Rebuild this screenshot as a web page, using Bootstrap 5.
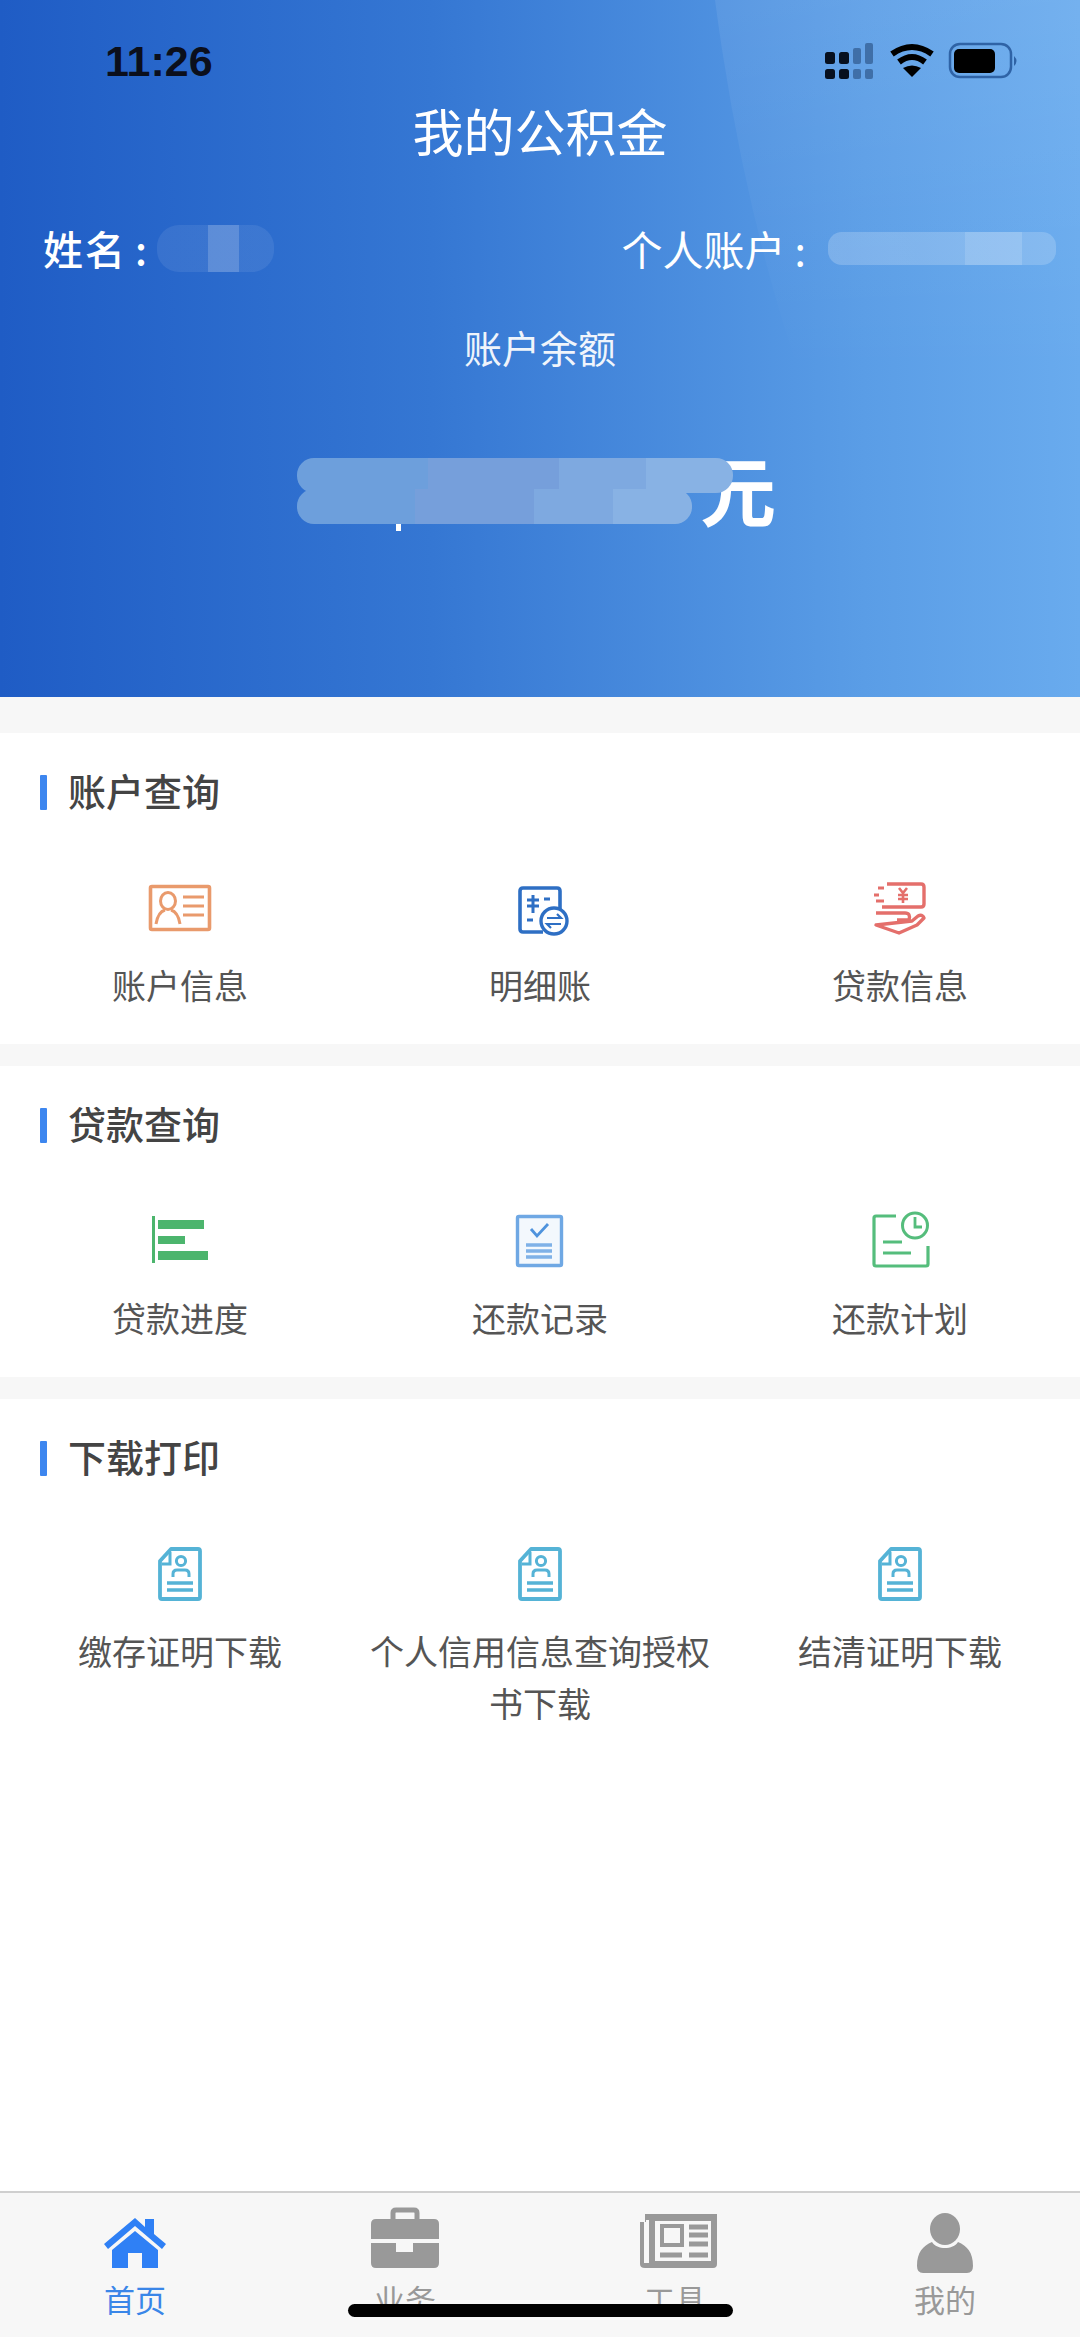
<!DOCTYPE html>
<html lang="zh-CN">
<head>
  <meta charset="UTF-8">
  <meta name="viewport" content="width=device-width, initial-scale=1.0">
  <title>我的公积金</title>
  <link href="https://cdn.jsdelivr.net/npm/bootstrap@5.3.0/dist/css/bootstrap.min.css" rel="stylesheet">
  <style>
    body { font-family: "Noto Sans CJK SC", "Liberation Sans", sans-serif; background: #fff; }
    .app-page { width: 1080px; height: 2337px; position: relative; overflow: hidden; }

    /* 顶部 */
    .hero { height: 697px; position: relative; overflow: hidden; background: linear-gradient(90deg, #1f5cc5 0%, #3577d3 40%, #5a9de6 80%, #69abee 100%); }
    .hero::after { content: ""; position: absolute; left: 696px; top: -1500px; width: 1200px; height: 2400px; border-radius: 50%; background: linear-gradient(180deg, rgba(255,255,255,.08) 0 62%, rgba(255,255,255,0) 78%); }
    .hero > * { position: relative; z-index: 1; }
    .status-row { height: 62px; margin-top: 30px; margin-bottom: 3px; padding: 0 58px 0 105px; }
    .status-time { font: bold 43px/62px "Liberation Sans", sans-serif; color: #0b0f1c; }
    .hero-title { font-size: 51px; line-height: 70px; color: #fff; }
    .info-row { height: 60px; margin-top: 53px; padding: 0 24px 0 43px; color: #fff; }
    .name-label { font-size: 40px; font-weight: 500; line-height: 60px; letter-spacing: 2px; }
    .name-colon { margin-left: 8px; }
    .acct-label { font-size: 41px; line-height: 60px; margin-right: 22px; }
    .mask-name { width: 117px; height: 47px; margin-left: 8px; border-radius: 22px; background: linear-gradient(90deg, rgba(255,255,255,.08) 0 44%, rgba(255,255,255,.24) 44% 70%, rgba(255,255,255,.08) 70%); }
    .mask-acct { width: 228px; height: 33px; border-radius: 14px; background: linear-gradient(90deg, rgba(255,255,255,.2) 0 60%, rgba(255,255,255,.3) 60% 85%, rgba(255,255,255,.18) 85%); }
    .balance-label { font-size: 38px; line-height: 50px; margin-top: 44px; color: #fff; opacity: .92; }
    .amount-row { height: 90px; margin-top: 73px; position: relative; }
    .amount-unit { position: absolute; left: 700px; top: -2px; font-size: 76px; line-height: 90px; font-weight: 700; color: #fff; }
    .amount-mask { position: absolute; left: 297px; height: 35px; border-radius: 17px; background: linear-gradient(90deg, #6d9fdc 0 30%, #769fdb 30% 60%, #7ea9e0 60% 80%, #88b2e4 80%); }
    .amount-mask.mask-top { top: 13px; width: 436px; }
    .amount-mask.mask-low { top: 44px; width: 395px; }
    .amount-tick { position: absolute; left: 396px; top: 77px; width: 5px; height: 9px; background: #fff; }

    /* 功能分组 */
    .page-body { background: #f7f7f7; padding-top: 36px; }
    .func-group { background: #fff; padding-top: 41px; padding-bottom: 33px; margin-bottom: 22px; }
    .func-group.last-group { margin-bottom: 0; height: 790px; }
    .group-head { height: 36px; }
    .group-bar { width: 7px; height: 35px; margin-left: 40px; margin-right: 21px; background: #3d86ef; border-radius: 1px; }
    .group-title { font-size: 38px; line-height: 36px; font-weight: 500; color: #444; padding-bottom: 5px; }
    .func-list { margin-top: 63px; }
    .func-icon { height: 70px; margin-bottom: 16px; }
    .func-label { font-size: 34px; line-height: 52px; color: #555; padding: 0 8px; }

    /* 底部 */
    .tab-bar { position: absolute; left: 0; right: 0; bottom: 0; height: 146px; background: #f7f7f7; border-top: 2px solid #cfcfcf; padding-top: 13px; }
    .tab-name { font-size: 31px; line-height: 40px; margin-top: 3px; color: #999; }
    .tab-name.is-on { color: #3a86e8; }
    .home-line { position: absolute; left: 348px; top: 2304px; width: 385px; height: 13px; border-radius: 7px; background: #000; }
  </style>
</head>
<body>
  <div class="app-page">
    <div class="hero">
      <div class="status-row d-flex justify-content-between align-items-center">
        <span class="status-time">11:26</span>
        <svg width="200" height="44" viewBox="0 0 200 44">
          <g fill="#07101f">
            <rect x="3" y="13" width="10" height="12" rx="2.5"/><rect x="17" y="13" width="10" height="12" rx="2.5"/>
            <rect x="3" y="30" width="10" height="10" rx="2.5"/><rect x="17" y="30" width="10" height="10" rx="2.5"/>
          </g>
          <g fill="#3f6fa8">
            <rect x="31" y="9" width="8" height="16" rx="2"/><rect x="43" y="4" width="8" height="21" rx="2"/>
            <rect x="31" y="30" width="8" height="10" rx="2"/><rect x="43" y="30" width="8" height="10" rx="2"/>
          </g>
          <path d="M70 15 Q90 1 110 15" fill="none" stroke="#000" stroke-width="6"/>
          <path d="M77 23 Q90 13 103 23" fill="none" stroke="#000" stroke-width="6"/>
          <path d="M81 29 Q90 24 99 29 L90 38 Z" fill="#000"/>
          <rect x="128" y="5" width="61" height="33" rx="10" fill="none" stroke="#2f63a6" stroke-width="2.5"/>
          <rect x="132" y="10" width="41" height="24" rx="5" fill="#000"/>
          <path d="M192 17 Q197 22 192 27 Z" fill="#2f63a6"/>
        </svg>
      </div>
      <div class="hero-title text-center">我的公积金</div>
      <div class="info-row d-flex align-items-center">
        <span class="name-label">姓名<span class="name-colon">:</span></span>
        <span class="mask-name"></span>
        <span class="acct-label ms-auto">个人账户 :</span>
        <span class="mask-acct"></span>
      </div>
      <div class="balance-label text-center">账户余额</div>
      <div class="amount-row">
        <span class="amount-unit">元</span>
        <span class="amount-tick"></span>
        <span class="amount-mask mask-top"></span>
        <span class="amount-mask mask-low"></span>
      </div>
    </div>

    <div class="page-body">
      <svg width="0" height="0" class="d-block">
        <symbol id="doc-icon" viewBox="0 0 70 70">
          <path d="M26 10 H53 Q55 10 55 12 V58 Q55 60 53 60 H17 Q15 60 15 58 V22 Z" fill="none" stroke="#55b3d6" stroke-width="3.8" stroke-linejoin="round"/>
          <path d="M25 13 V25 H17" fill="none" stroke="#55b3d6" stroke-width="3"/>
          <circle cx="36" cy="22" r="4.6" fill="none" stroke="#55b3d6" stroke-width="3"/>
          <path d="M28 38 V35 Q28 31 32 31 H40 Q44 31 44 35 V38" fill="none" stroke="#55b3d6" stroke-width="3"/>
          <path d="M22 44 H48 M22 51 H48" stroke="#55b3d6" stroke-width="3.4"/>
        </symbol>
      </svg>

      <div class="func-group">
        <div class="group-head d-flex align-items-center">
          <span class="group-bar"></span><span class="group-title">账户查询</span>
        </div>
        <div class="func-list row g-0 text-center">
          <div class="col-4">
            <div class="func-icon d-flex justify-content-center">
              <svg width="70" height="70" viewBox="0 0 70 70">
                <rect x="5.5" y="13.5" width="59" height="43" rx="1.5" fill="none" stroke="#e99a6c" stroke-width="3.6"/>
                <ellipse cx="23" cy="28" rx="7.5" ry="8.5" fill="none" stroke="#e99a6c" stroke-width="3"/>
                <path d="M11 51 Q13 39 20 37 M35 51 Q33 39 26 37" fill="none" stroke="#e99a6c" stroke-width="3"/>
                <path d="M38 24 H59 M38 33 H59 M38 42 H59" stroke="#e99a6c" stroke-width="3"/>
              </svg>
            </div>
            <div class="func-label">账户信息</div>
          </div>
          <div class="col-4">
            <div class="func-icon d-flex justify-content-center">
              <svg width="70" height="70" viewBox="0 0 70 70">
                <path d="M38 59 H18 Q15 59 15 56 V18 Q15 15 18 15 H52 Q55 15 55 18 V36" fill="none" stroke="#2e6fc4" stroke-width="3.6"/>
                <path d="M22 27 H34 M22 33 H34 M28 22 V40 M39 26 H45 M22 47 H28" stroke="#2e6fc4" stroke-width="3" fill="none"/>
                <circle cx="49" cy="48" r="13" fill="#fff" stroke="#2e6fc4" stroke-width="3.4"/>
                <path d="M42 45 H56 L52 41 M56 51 H42 L46 55" fill="none" stroke="#2e6fc4" stroke-width="2.2"/>
              </svg>
            </div>
            <div class="func-label">明细账</div>
          </div>
          <div class="col-4">
            <div class="func-icon d-flex justify-content-center">
              <svg width="70" height="70" viewBox="0 0 70 70">
                <path d="M22 11 H56 Q59 11 59 14 V31 Q59 34 56 34 H17" fill="none" stroke="#e46f6b" stroke-width="3.4"/>
                <path d="M34 15 L38 20 L42 15 M38 20 V30 M33 22 H43 M33 26 H43" fill="none" stroke="#e46f6b" stroke-width="2.6"/>
                <path d="M13 15 H19 M9 22 H14 M11 28 H19" stroke="#e46f6b" stroke-width="3"/>
                <path d="M11 40 H40 Q46 40 44 47 H32 M47 48 L53 43 Q57 41 59 45 L52 52 L34 60 L11 52 Z" fill="none" stroke="#e46f6b" stroke-width="3.4" stroke-linejoin="round"/>
              </svg>
            </div>
            <div class="func-label">贷款信息</div>
          </div>
        </div>
      </div>

      <div class="func-group">
        <div class="group-head d-flex align-items-center">
          <span class="group-bar"></span><span class="group-title">贷款查询</span>
        </div>
        <div class="func-list row g-0 text-center">
          <div class="col-4">
            <div class="func-icon d-flex justify-content-center">
              <svg width="70" height="70" viewBox="0 0 70 70">
                <rect x="7" y="10" width="3" height="47" fill="#4cb56d"/>
                <rect x="13" y="14" width="46" height="9" fill="#4cb56d"/>
                <rect x="13" y="30" width="27" height="8" fill="#4cb56d"/>
                <rect x="13" y="45" width="50" height="9" fill="#4cb56d"/>
              </svg>
            </div>
            <div class="func-label">贷款进度</div>
          </div>
          <div class="col-4">
            <div class="func-icon d-flex justify-content-center">
              <svg width="70" height="70" viewBox="0 0 70 70">
                <rect x="12.5" y="10.5" width="44" height="49" rx="1.5" fill="#f3f8fd" stroke="#6fa8e4" stroke-width="3.4"/>
                <path d="M26 23 L32 30 L43 18" fill="none" stroke="#4f93dd" stroke-width="2.8"/>
                <path d="M21 39 H47 M21 45 H47 M21 51 H47" stroke="#7fb1e7" stroke-width="3.4"/>
              </svg>
            </div>
            <div class="func-label">还款记录</div>
          </div>
          <div class="col-4">
            <div class="func-icon d-flex justify-content-center">
              <svg width="70" height="70" viewBox="0 0 70 70">
                <path d="M31 10 H11 Q9 10 9 12 V58 Q9 60 11 60 H61 Q63 60 63 58 V40" fill="none" stroke="#55bd7c" stroke-width="3.2"/>
                <circle cx="50" cy="19.5" r="12.5" fill="#fff" stroke="#55bd7c" stroke-width="3"/>
                <path d="M50 11 V21 H57" fill="none" stroke="#55bd7c" stroke-width="2.8"/>
                <path d="M18 36 H37 M18 47 H46" stroke="#55bd7c" stroke-width="3"/>
              </svg>
            </div>
            <div class="func-label">还款计划</div>
          </div>
        </div>
      </div>

      <div class="func-group last-group">
        <div class="group-head d-flex align-items-center">
          <span class="group-bar"></span><span class="group-title">下载打印</span>
        </div>
        <div class="func-list row g-0 text-center">
          <div class="col-4">
            <div class="func-icon d-flex justify-content-center"><svg width="70" height="70"><use href="#doc-icon"/></svg></div>
            <div class="func-label">缴存证明下载</div>
          </div>
          <div class="col-4">
            <div class="func-icon d-flex justify-content-center"><svg width="70" height="70"><use href="#doc-icon"/></svg></div>
            <div class="func-label">个人信用信息查询授权书下载</div>
          </div>
          <div class="col-4">
            <div class="func-icon d-flex justify-content-center"><svg width="70" height="70"><use href="#doc-icon"/></svg></div>
            <div class="func-label">结清证明下载</div>
          </div>
        </div>
      </div>
    </div>

    <div class="tab-bar row g-0 text-center">
      <div class="col-3">
        <svg width="90" height="70" viewBox="-5 0 90 70">
          <path d="M40 12 L50 21 V13 H59 V28 L71 38 L67 43 L40 20 L13 43 L9 38 Z" fill="#2f80f5"/>
          <path d="M40 25 L63 44 V62 H47 V47 H33 V62 H17 V44 Z" fill="#2f80f5"/>
        </svg>
        <div class="tab-name is-on">首页</div>
      </div>
      <div class="col-3">
        <svg width="90" height="70" viewBox="-5 0 90 70">
          <path d="M28 13 V7 Q28 4 31 4 H49 Q52 4 52 7 V13" fill="none" stroke="#999" stroke-width="5"/>
          <path d="M6 33 V18 Q6 13 11 13 H69 Q74 13 74 18 V33 Z" fill="#999"/>
          <path d="M6 37 H31 V46 H48 V37 H74 V57 Q74 62 69 62 H11 Q6 62 6 57 Z" fill="#999"/>
          <rect x="35" y="36" width="9" height="6" fill="#f7f7f7"/>
        </svg>
        <div class="tab-name">业务</div>
      </div>
      <div class="col-3">
        <svg width="90" height="70" viewBox="-5 0 90 70">
          <path d="M10 8 H82 V58 Q82 62 78 62 H10 Q5 62 5 58 V16 H10 Z" fill="#999"/>
          <rect x="11" y="14" width="65" height="43" fill="#f7f7f7"/>
          <rect x="9" y="16" width="3" height="41" fill="#f7f7f7"/>
          <rect x="14" y="12" width="64" height="46" fill="#999"/>
          <rect x="20" y="15" width="56" height="40" fill="#f7f7f7"/>
          <rect x="25" y="18" width="24" height="23" fill="#999"/>
          <rect x="29" y="22" width="16" height="15" fill="#f7f7f7"/>
          <path d="M54 21 H73 M54 29 H73 M54 38 H73 M25 49 H47 M54 49 H73" stroke="#999" stroke-width="5"/>
        </svg>
        <div class="tab-name">工具</div>
      </div>
      <div class="col-3">
        <svg width="90" height="70" viewBox="-5 0 90 70">
          <ellipse cx="40" cy="23" rx="15" ry="16" fill="#999"/>
          <path d="M12 60 C12 46 18 40 27 36 C32 44 48 44 53 36 C62 40 68 46 68 60 Q68 67 62 67 H18 Q12 67 12 60 Z" fill="#999"/>
        </svg>
        <div class="tab-name">我的</div>
      </div>
    </div>
    <div class="home-line"></div>
  </div>
  <script src="https://cdn.jsdelivr.net/npm/bootstrap@5.3.0/dist/js/bootstrap.bundle.min.js"></script>
</body>
</html>
